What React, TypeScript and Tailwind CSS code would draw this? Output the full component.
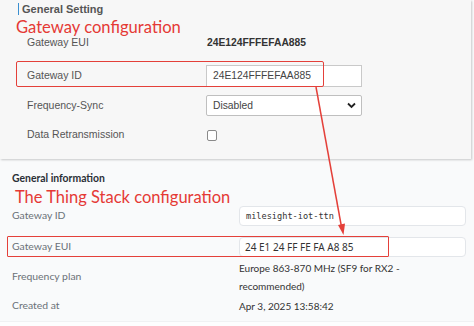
import React from "react";

const RED = "#e4403a";

export default function App() {
  return (
    <div className="relative w-[474px] h-[326px] overflow-hidden bg-[#f9fafb]">
      {/* Top panel: Milesight gateway */}
      <div className="w-[471px] h-[159px] bg-[#f7f7f7] shadow-[1px_1px_2px_rgba(0,0,0,0.2)] pt-[2px] font-['Liberation_Sans',Arial,sans-serif]">
        <div className="h-[14px] flex items-center pl-[18px]">
          <div className="border-l-[1.5px] border-[#3a8fd0] pl-[3px] h-[12px] flex items-center text-[11px] font-bold text-[#555] leading-none">
            General Setting
          </div>
        </div>
        <div className="h-[20px] pl-[16px] text-[16.6px] leading-[20px] pt-[1px] text-[#e53935] font-['Lato',sans-serif]">
          Gateway configuration
        </div>
        <div className="flex flex-col -mt-[2px]">
          <div className="h-[18px] flex items-center">
            <div className="w-[206px] pl-[27px] text-[10.5px] text-[#555]">Gateway EUI</div>
            <div className="pl-[1px] text-[10.3px] font-bold text-[#333]">24E124FFFEFAA885</div>
          </div>
          <div className="mt-[13px] h-[22px] flex items-center">
            <div className="w-[206px] pl-[27px] text-[10.5px] text-[#555]">Gateway ID</div>
            <div className="w-[156px] h-[22px] bg-white border border-[#c9c9c9] flex items-center px-[6px] text-[10.3px] text-[#444]">
              24E124FFFEFAA885
            </div>
          </div>
          <div className="mt-[8px] h-[21px] flex items-center">
            <div className="w-[206px] pl-[27px] text-[10.5px] text-[#555]">Frequency-Sync</div>
            <div className="w-[156px] h-[21px] bg-white border border-[#bfbfbf] rounded-[2px] flex items-center justify-between pl-[6px] pr-[5px] text-[10.3px] text-[#444]">
              <span>Disabled</span>
              <svg width="9" height="7" viewBox="0 0 9 7">
                <path d="M1 1.5 L4.5 5 L8 1.5" fill="none" stroke="#222" strokeWidth="1.8" />
              </svg>
            </div>
          </div>
          <div className="mt-[10px] h-[18px] flex items-center">
            <div className="w-[207px] pl-[27px] text-[10.5px] text-[#555]">Data Retransmission</div>
            <div className="w-[10px] h-[11px] bg-white border border-[#8a8a8a] rounded-[2px]" />
          </div>
        </div>
      </div>

      {/* Bottom panel: The Things Stack */}
      <div className="pt-[12px] font-['Lato',sans-serif]">
        <div className="h-[14px] pl-[12px] text-[10.4px] leading-[14px] font-bold text-[#2a2f36]">
          General information
        </div>
        <div className="mt-[3px] h-[19px] pl-[15px] text-[16.5px] leading-[19px] text-[#e53935]">
          The Thing Stack configuration
        </div>
        <div className="flex flex-col -mt-[1px]">
          <div className="h-[20px] flex items-center">
            <div className="w-[239px] pl-[12px] text-[10.4px] text-[#6b7178]">Gateway ID</div>
            <div className="w-[227px] h-[20px] bg-white border border-[#e3e6ea] rounded-[4px] flex items-center pl-[6px] text-[8.6px] text-[#333] font-['DejaVu_Sans_Mono',monospace]">
              milesight-iot-ttn
            </div>
          </div>
          <div className="mt-[11px] h-[20px] flex items-center">
            <div className="w-[239px] pl-[12px] text-[10.4px] text-[#6b7178]">Gateway EUI</div>
            <div className="w-[227px] h-[20px] bg-white border border-[#e3e6ea] rounded-[4px] flex items-center pl-[5px] text-[10px] text-[#333] font-['Noto_Sans',sans-serif]">
              24 E1 24 FF FE FA A8 85
            </div>
          </div>
          <div className="mt-[2px] flex items-center">
            <div className="w-[239px] pl-[12px] text-[10.4px] text-[#6b7178]">Frequency plan</div>
            <div className="w-[227px] text-[10px] leading-[18px] text-[#333]">
              Europe 863-870 MHz (SF9 for RX2 -<br />recommended)
            </div>
          </div>
          <div className="mt-[2px] h-[18px] flex items-center">
            <div className="w-[239px] pl-[12px] text-[10.4px] text-[#6b7178]">Created at</div>
            <div className="text-[10px] text-[#333]">Apr 3, 2025 13:58:42</div>
          </div>
        </div>
      </div>
      <div className="absolute left-0 bottom-0 w-[474px] h-[5px] bg-[#fdfdfe] border-t border-[#f0f1f3]" />

      {/* Annotations */}
      <div className="absolute left-[16px] top-[61px] w-[308px] h-[26px] border-[1.5px] border-[#e4403a] rounded-[2px]" />
      <div className="absolute left-[7px] top-[236px] w-[382px] h-[21px] border-[1.5px] border-[#e4403a] rounded-[1px]" />
      <svg className="absolute left-0 top-0" width="474" height="326" viewBox="0 0 474 326">
        <line x1="316" y1="87" x2="341.5" y2="227" stroke={RED} strokeWidth="1.5" />
        <path d="M338 225 L343.5 235 L345 223.5 Z" fill={RED} />
      </svg>
    </div>
  );
}
